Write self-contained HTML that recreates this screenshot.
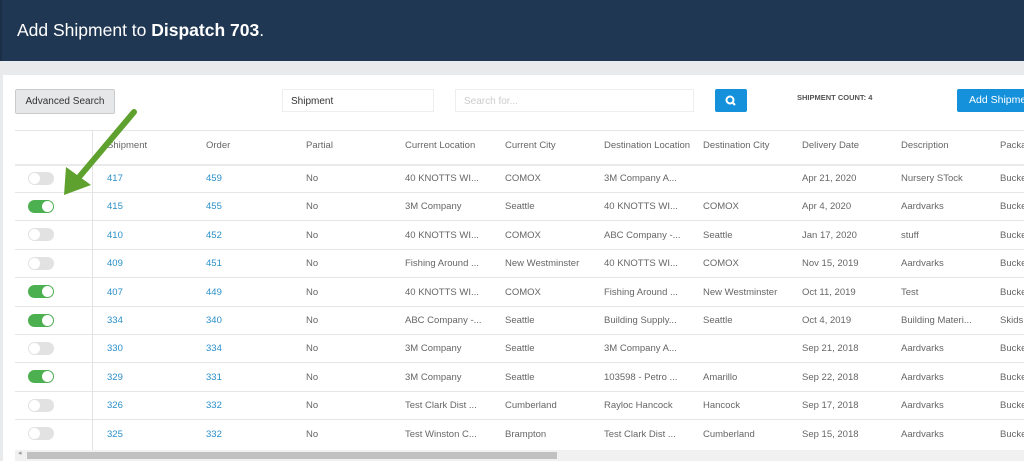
<!DOCTYPE html>
<html><head><style>
body{margin:0;width:1024px;height:461px;overflow:hidden;background:#e9eaec;font-family:"Liberation Sans",sans-serif;position:relative}
.hdr{position:absolute;left:0;top:0;width:1024px;height:61px;background:#1f3753;color:#fff;font-size:17.5px;line-height:61px;padding-left:15px;box-sizing:border-box;border-left:2px solid #1a2e45}
.panel{position:absolute;left:3px;top:75px;width:1021px;height:386px;background:#fff}
.abs{position:absolute}
.t{position:absolute;font-size:9.5px;color:#666;white-space:nowrap}
.l{color:#2a8fc9}
.tg{position:absolute;left:28px;width:26px;height:13px;border-radius:7px;background:#e2e2e2}
.tg::after{content:"";position:absolute;left:1px;top:1px;width:11px;height:11px;border-radius:50%;background:#fff}
.tg.on{background:#4cb051}
.tg.on::after{left:14px}
.hl{position:absolute;left:15px;width:1009px;height:1px;background:#e6e6e6}
</style></head><body>
<div class="hdr">Add Shipment to <span style="font-weight:600">Dispatch 703</span>.</div>
<div class="panel"></div>
<div class="abs" style="left:15px;top:89px;width:98px;height:23px;background:#e6e7e9;border:1px solid #c9cacc;border-radius:2px;font-size:10px;line-height:23px;text-align:center;color:#333">Advanced Search</div>
<div class="abs" style="left:282px;top:89px;width:152px;height:23px;border:1px solid #eee;font-size:10px;line-height:23px;padding-left:8px;box-sizing:border-box;color:#333">Shipment</div>
<div class="abs" style="left:455px;top:89px;width:239px;height:23px;border:1px solid #eee;font-size:10px;line-height:23px;padding-left:8px;box-sizing:border-box;color:#ccc">Search for...</div>
<div class="abs" style="left:715px;top:89px;width:32px;height:23px;background:#1591dc;border-radius:2px"><svg width="32" height="23"><circle cx="15" cy="11" r="3.5" fill="none" stroke="#fff" stroke-width="2"/><line x1="17.5" y1="13.5" x2="20" y2="16" stroke="#fff" stroke-width="2"/></svg></div>
<div class="t" style="left:797px;top:93px;font-size:7.5px;font-weight:bold;color:#555">SHIPMENT COUNT: 4</div>
<div class="abs" style="left:957px;top:89px;width:80px;height:23px;background:#1591dc;border-radius:2px;color:#fff;font-size:10.5px;line-height:23px;padding-left:12px;box-sizing:border-box;white-space:nowrap;overflow:hidden">Add Shipment</div>
<div class="hl" style="top:130px"></div>
<div class="abs" style="left:92px;top:130px;width:1px;height:320px;background:#e3e3e3"></div>
<div id="tb"></div>
<div class="abs" style="left:15px;top:450px;width:1009px;height:11px;background:#f1f1f1"></div>
<div class="abs" style="left:27px;top:452px;width:530px;height:7px;background:#c1c1c1"></div>
<div class="t" style="left:18px;top:449px;font-size:7px;color:#999">◂</div>
<svg class="abs" style="left:0;top:0" width="200" height="220"><line x1="134" y1="112" x2="80" y2="176" stroke="#5fa12e" stroke-width="6" stroke-linecap="round"/><polygon points="64,195 66,167 91,185" fill="#5fa12e"/></svg>
<script>
var cols=[107,206,306,405,505,604,703,802,901,1000];
var hd=["Shipment","Order","Partial","Current Location","Current City","Destination Location","Destination City","Delivery Date","Description","Packa"];
var rows=[[0,"417","459","No","40 KNOTTS WI...","COMOX","3M Company A...","","Apr 21, 2020","Nursery STock","Bucke"],
[1,"415","455","No","3M Company","Seattle","40 KNOTTS WI...","COMOX","Apr 4, 2020","Aardvarks","Bucke"],
[0,"410","452","No","40 KNOTTS WI...","COMOX","ABC Company -...","Seattle","Jan 17, 2020","stuff","Bucke"],
[0,"409","451","No","Fishing Around ...","New Westminster","40 KNOTTS WI...","COMOX","Nov 15, 2019","Aardvarks","Bucke"],
[1,"407","449","No","40 KNOTTS WI...","COMOX","Fishing Around ...","New Westminster","Oct 11, 2019","Test","Bucke"],
[1,"334","340","No","ABC Company -...","Seattle","Building Supply...","Seattle","Oct 4, 2019","Building Materi...","Skids"],
[0,"330","334","No","3M Company","Seattle","3M Company A...","","Sep 21, 2018","Aardvarks","Bucke"],
[1,"329","331","No","3M Company","Seattle","103598 - Petro ...","Amarillo","Sep 22, 2018","Aardvarks","Bucke"],
[0,"326","332","No","Test Clark Dist ...","Cumberland","Rayloc Hancock","Hancock","Sep 17, 2018","Aardvarks","Bucke"],
[0,"325","332","No","Test Winston C...","Brampton","Test Clark Dist ...","Cumberland","Sep 15, 2018","Aardvarks","Bucke"]];
var h="";
hd.forEach(function(x,i){h+='<div class="t" style="left:'+cols[i]+'px;top:140px">'+x+'</div>';});
h+='<div class="hl" style="top:164px;height:2px;background:#eaeaea"></div>';
rows.forEach(function(r,j){var c=178+j*28.4;
h+='<div class="tg'+(r[0]?' on':'')+'" style="top:'+(c-6.5)+'px"></div>';
for(var i=1;i<r.length;i++)h+='<div class="t'+(i<3?' l':'')+'" style="left:'+cols[i-1]+'px;top:'+(c-5)+'px">'+r[i]+'</div>';
if(j<9)h+='<div class="hl" style="top:'+(c+14)+'px"></div>';});
document.getElementById("tb").innerHTML=h;
</script>
</body></html>
